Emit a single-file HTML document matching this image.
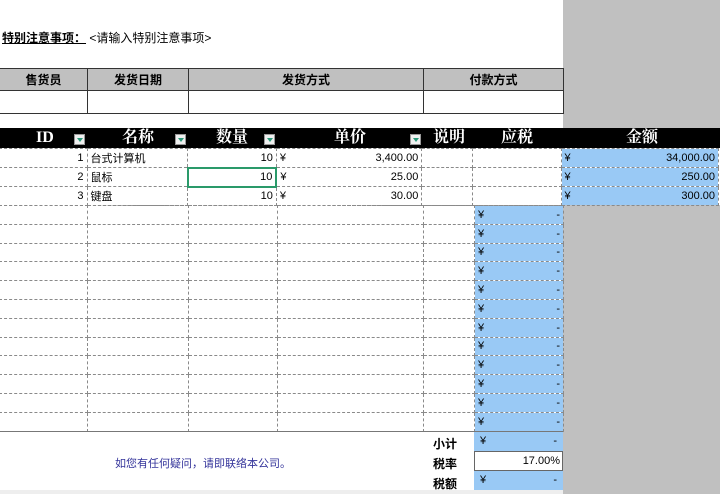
<!DOCTYPE html>
<html><head><meta charset="utf-8"><style>
*{margin:0;padding:0;box-sizing:border-box}
body{width:720px;height:494px;overflow:hidden;background:#fff;position:relative;font-family:"Liberation Sans","Noto Sans CJK SC",sans-serif;font-size:11px;color:#000}
.a{position:absolute}
.gray{background:#c0c0c0}
table{border-collapse:collapse;position:absolute}
td{padding:0 3px;white-space:nowrap;overflow:hidden}
.g td{border:1px dashed #8a8a8a}
.b{background:#99c9f5}
.r{text-align:right}
.hdr td{border:1px solid #333;text-align:center;font-weight:bold;font-size:12px}
.bar{background:#000}
.lb{position:absolute;top:128px;height:20px;line-height:20px;color:#fff;font-family:"Liberation Serif","Noto Serif CJK SC",serif;font-size:16px;font-weight:bold}
.dd{position:absolute;width:11px;height:11px;background:#f0f0f0;border:1px solid #999;top:134px}
.dd:after{content:"";position:absolute;left:2px;top:3px;border:3px solid transparent;border-top:4px solid #2a9a7a}
</style></head><body>
<div class="a gray" style="left:563px;top:0;width:157px;height:128px"></div>
<div class="a gray" style="left:563px;top:205px;width:157px;height:289px"></div>
<div class="a" style="left:0;top:490px;width:563px;height:4px;background:#eee"></div>
<div class="a" style="left:2px;top:29px;font-size:12px"><b style="text-decoration:underline">特别注意事项：</b> &lt;请输入特别注意事项&gt;</div>
<table class="hdr" style="left:-1px;top:68px">
<tr style="height:22px;background:#c0c0c0"><td style="width:88px">售货员</td><td style="width:101px">发货日期</td><td style="width:235px">发货方式</td><td style="width:140px">付款方式</td></tr>
<tr style="height:23px"><td></td><td></td><td></td><td></td></tr>
</table>
<div class="a bar" style="left:0;top:128px;width:720px;height:20px"></div>
<div class="lb" style="left:36px">ID</div>
<div class="lb" style="left:122px">名称</div>
<div class="lb" style="left:216px">数量</div>
<div class="lb" style="left:334px">单价</div>
<div class="lb" style="left:433px">说明</div>
<div class="lb" style="left:501px">应税</div>
<div class="lb" style="left:626px">金额</div>
<div class="dd" style="left:74px"></div><div class="dd" style="left:175px"></div><div class="dd" style="left:264px"></div><div class="dd" style="left:410px"></div>
<table class="g" style="left:-1px;top:148px">
<tr style="height:19px"><td class="r" style="width:88px">1</td><td style="width:101px">台式计算机</td><td class="r" style="width:89px">10</td><td style="width:146px">¥<span style="float:right">3,400.00</span></td><td style="width:51px"></td><td style="width:89px"></td><td class="b" style="width:158px">¥<span style="float:right">34,000.00</span></td></tr>
<tr style="height:19px"><td class="r">2</td><td>鼠标</td><td class="r" style="border:2px solid #2a9a6a">10</td><td>¥<span style="float:right">25.00</span></td><td></td><td></td><td class="b">¥<span style="float:right">250.00</span></td></tr>
<tr style="height:19px"><td class="r">3</td><td>键盘</td><td class="r">10</td><td>¥<span style="float:right">30.00</span></td><td></td><td></td><td class="b">¥<span style="float:right">300.00</span></td></tr>
</table>
<table class="g" style="left:-1px;top:205px">
<tr style="height:18.8px"><td style="width:88px"></td><td style="width:101px"></td><td style="width:89px"></td><td style="width:146px"></td><td style="width:51px"></td><td class="b" style="width:89px">¥<span style="float:right">-</span></td></tr>
<tr style="height:18.8px"><td></td><td></td><td></td><td></td><td></td><td class="b">¥<span style="float:right">-</span></td></tr>
<tr style="height:18.8px"><td></td><td></td><td></td><td></td><td></td><td class="b">¥<span style="float:right">-</span></td></tr>
<tr style="height:18.8px"><td></td><td></td><td></td><td></td><td></td><td class="b">¥<span style="float:right">-</span></td></tr>
<tr style="height:18.8px"><td></td><td></td><td></td><td></td><td></td><td class="b">¥<span style="float:right">-</span></td></tr>
<tr style="height:18.8px"><td></td><td></td><td></td><td></td><td></td><td class="b">¥<span style="float:right">-</span></td></tr>
<tr style="height:18.8px"><td></td><td></td><td></td><td></td><td></td><td class="b">¥<span style="float:right">-</span></td></tr>
<tr style="height:18.8px"><td></td><td></td><td></td><td></td><td></td><td class="b">¥<span style="float:right">-</span></td></tr>
<tr style="height:18.8px"><td></td><td></td><td></td><td></td><td></td><td class="b">¥<span style="float:right">-</span></td></tr>
<tr style="height:18.8px"><td></td><td></td><td></td><td></td><td></td><td class="b">¥<span style="float:right">-</span></td></tr>
<tr style="height:18.8px"><td></td><td></td><td></td><td></td><td></td><td class="b">¥<span style="float:right">-</span></td></tr>
<tr style="height:18.8px"><td></td><td></td><td></td><td></td><td></td><td class="b">¥<span style="float:right">-</span></td></tr>
</table>
<div class="a" style="left:0;top:431px;width:563px;height:1px;background:#777"></div>
<div class="a b" style="left:474px;top:432px;width:89px;height:19px;line-height:19px;padding:0 6px">¥<span style="float:right">-</span></div>
<div class="a" style="left:474px;top:451px;width:89px;height:20px;border:1px solid #666;background:#fff;text-align:right;padding:3px 2px">17.00%</div>
<div class="a b" style="left:474px;top:471px;width:89px;height:19px;line-height:19px;padding:0 6px">¥<span style="float:right">-</span></div>
<div class="a" style="left:433px;top:435px;font-weight:bold;font-size:12px">小计</div>
<div class="a" style="left:433px;top:455px;font-weight:bold;font-size:12px">税率</div>
<div class="a" style="left:433px;top:475px;font-weight:bold;font-size:12px">税额</div>
<div class="a" style="left:115px;top:455px;color:#33339a;font-size:11px">如您有任何疑问，请即联络本公司。</div>
</body></html>
